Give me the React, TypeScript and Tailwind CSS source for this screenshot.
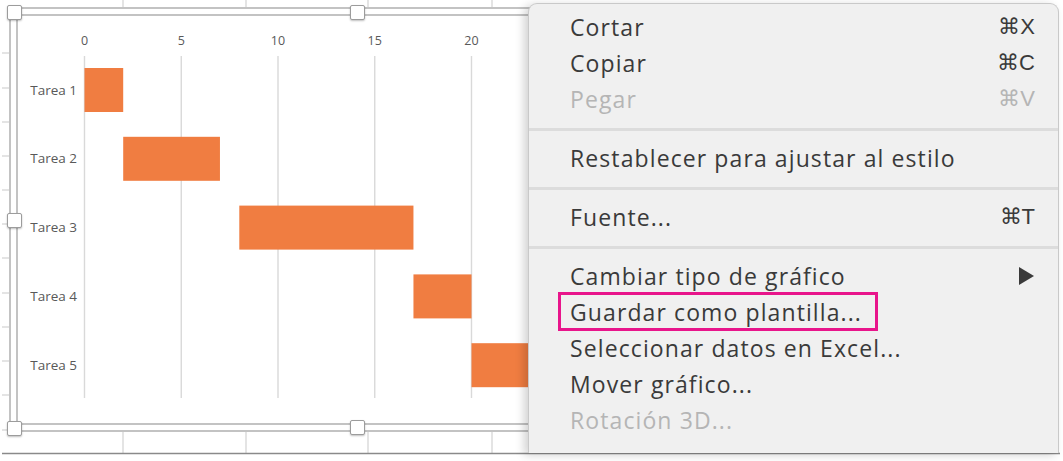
import React from 'react';

const tasks = [
  { name: 'Tarea 1', start: 0, dur: 2 },
  { name: 'Tarea 2', start: 2, dur: 5 },
  { name: 'Tarea 3', start: 8, dur: 9 },
  { name: 'Tarea 4', start: 17, dur: 3 },
  { name: 'Tarea 5', start: 20, dur: 5 },
];

const X0 = 84.5;
const UNIT = 19.35;
const Y0 = 56;
const ROW = 68.8;
const BAR_H = 44;

type Item = { label: string; shortcut?: string; disabled?: boolean; arrow?: boolean; boxed?: boolean };

const groups: Item[][] = [
  [
    { label: 'Cortar', shortcut: '⌘X' },
    { label: 'Copiar', shortcut: '⌘C' },
    { label: 'Pegar', shortcut: '⌘V', disabled: true },
  ],
  [{ label: 'Restablecer para ajustar al estilo' }],
  [{ label: 'Fuente...', shortcut: '⌘T' }],
  [
    { label: 'Cambiar tipo de gráfico', arrow: true },
    { label: 'Guardar como plantilla...', boxed: true },
    { label: 'Seleccionar datos en Excel...' },
    { label: 'Mover gráfico...' },
    { label: 'Rotación 3D...', disabled: true },
  ],
];

const Handle = ({ className }: { className: string }) => (
  <div className={`absolute w-[15px] h-[15px] bg-white border-[1.5px] border-[#9c9c9c] rounded-[2px] shadow-[0_1px_2px_rgba(0,0,0,0.25)] ${className}`} />
);

const SheetGrid = () => {
  const rows = [53, 88, 122, 156, 190, 224, 258, 293, 327, 361, 395, 430];
  const cols = [123, 246, 368, 492];
  return (
    <svg className="absolute inset-0" width={1063} height={461}>
      {rows.map((y) => (
        <line key={y} x1={2} x2={10} y1={y} y2={y} stroke="#d2d2d2" strokeWidth={1.2} />
      ))}
      {cols.map((x) => (
        <g key={x}>
          <line x1={x} x2={x} y1={0} y2={8} stroke="#d2d2d2" strokeWidth={1.2} />
          <line x1={x} x2={x} y1={431} y2={453} stroke="#d2d2d2" strokeWidth={1.2} />
        </g>
      ))}
      <line x1={2} x2={1060} y1={453.5} y2={453.5} stroke="#8a8a8a" strokeWidth={1.6} />
    </svg>
  );
};

const Chart = () => (
  <svg width={542} height={407} viewBox="18 16 542 407" className="block">
    {[0, 5, 10, 15, 20, 25].map((v) => {
      const x = X0 + v * UNIT;
      return (
        <g key={v}>
          <line x1={x} x2={x} y1={Y0} y2={Y0 + 5 * ROW - 2} stroke="#d9d9d9" strokeWidth={1.4} />
          {v < 25 && (
            <text x={x} y={45} textAnchor="middle" fontSize={12.5} fill="#595959" fontFamily="'Open Sans', sans-serif">
              {v}
            </text>
          )}
        </g>
      );
    })}
    {tasks.map((t, i) => {
      const top = Y0 + i * ROW + 12;
      return (
        <g key={t.name}>
          <text
            x={77}
            y={top + BAR_H / 2 + 4.5}
            textAnchor="end"
            fontSize={13.5}
            fill="#595959"
            fontFamily="'Open Sans', sans-serif"
          >
            {t.name}
          </text>
          <rect x={X0 + t.start * UNIT} y={top} width={t.dur * UNIT} height={BAR_H} fill="#f07d41" />
        </g>
      );
    })}
  </svg>
);

export default function App() {
  return (
    <div className="relative w-[1063px] h-[461px] bg-white overflow-hidden font-['Open_Sans',sans-serif]">
      <SheetGrid />

      {/* chart object with selection frame */}
      <div className="absolute left-[9px] top-[7px] w-[560px] h-[425px] border-2 border-[#c3c3c3] p-[5px] bg-white">
        <div className="w-full h-full border-2 border-[#c3c3c3] bg-white">
          <Chart />
        </div>
      </div>
      <Handle className="left-[7px] top-[5px]" />
      <Handle className="left-[350px] top-[5px]" />
      <Handle className="left-[7px] top-[213px]" />
      <Handle className="left-[7px] top-[421px]" />
      <Handle className="left-[350px] top-[420px]" />

      {/* context menu */}
      <div className="absolute left-[528px] top-[3px] w-[531px] h-[450px] bg-[#f0f0f0] border border-[#c9c9c9] border-b-0 rounded-t-[9px] shadow-[-4px_2px_10px_rgba(0,0,0,0.18)] pt-[5px] flex flex-col">
        {groups.map((g, gi) => (
          <div key={gi} className="flex flex-col">
            {gi > 0 && <div className="h-[3px] mt-[11px] mb-[9px] bg-[#dcdcdc]" />}
            {g.map((it) => (
              <div key={it.label} className="relative h-[36px] flex items-center pl-[41px] pr-[23px]">
                <span
                  className={`flex-1 text-[23px] leading-[36px] tracking-[1.1px] ${it.disabled ? 'text-[#b5b5b5]' : 'text-[#3a3a3a]'}`}
                >
                  {it.label}
                </span>
                {it.shortcut && (
                  <span
                    className={`text-[22px] leading-[36px] font-['Liberation_Sans',sans-serif] ${it.disabled ? 'text-[#b5b5b5]' : 'text-[#3a3a3a]'}`}
                  >
                    {it.shortcut}
                  </span>
                )}
                {it.arrow && (
                  <svg width={16} height={18} viewBox="0 0 16 18" className="mr-[1px]">
                    <polygon points="1,0 16,9 1,18" fill="#3a3a3a" />
                  </svg>
                )}
                {it.boxed && (
                  <div className="absolute left-[29px] top-[-2px] w-[320px] h-[39px] border-[3px] border-[#e8158b]" />
                )}
              </div>
            ))}
          </div>
        ))}
      </div>
    </div>
  );
}
